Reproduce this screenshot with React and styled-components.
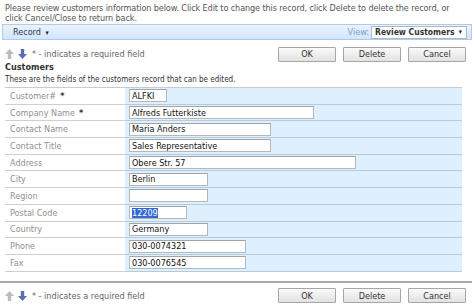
import React from 'react'
import styled, { createGlobalStyle } from 'styled-components'

const Global = createGlobalStyle`
  body {
    margin: 0;
    background: #fff;
    font-family: "DejaVu Sans Condensed", "DejaVu Sans", "Liberation Sans", sans-serif;
    font-size: 9px;
    color: #444;
  }
`

const fields = [
  { label: 'Customer#', req: true, value: 'ALFKI', w: 34 },
  { label: 'Company Name', req: true, value: 'Alfreds Futterkiste', w: 181 },
  { label: 'Contact Name', value: 'Maria Anders', w: 138 },
  { label: 'Contact Title', value: 'Sales Representative', w: 138 },
  { label: 'Address', value: 'Obere Str. 57', w: 223 },
  { label: 'City', value: 'Berlin', w: 75 },
  { label: 'Region', value: '', w: 75 },
  { label: 'Postal Code', value: '12209', w: 54, selected: true },
  { label: 'Country', value: 'Germany', w: 75 },
  { label: 'Phone', value: '030-0074321', w: 113 },
  { label: 'Fax', value: '030-0076545', w: 113 },
]

const App = () => {
  return (
    <Page>
      <Global />
      <Intro>
        Please review customers information below. Click Edit to change this record, click Delete to delete the record, or
        <br />
        click Cancel/Close to return back.
      </Intro>

      <Toolbar>
        <Menu>Record <Caret>▾</Caret></Menu>
        <ViewBox>
          <ViewLabel>View:</ViewLabel>
          <ViewSelect>
            <span>Review Customers</span>
            <Caret>▾</Caret>
          </ViewSelect>
        </ViewBox>
      </Toolbar>

      <ActionBar />

      <Title>Customers</Title>
      <Description>These are the fields of the customers record that can be edited.</Description>

      <Table>
        {fields.map((f) => (
          <Row key={f.label}>
            <Label>
              {f.label}
              {f.req && <Star>*</Star>}
            </Label>
            <Cell>
              <Input style={{ width: f.w }}>
                {f.selected ? <Selected>{f.value}</Selected> : f.value}
              </Input>
            </Cell>
          </Row>
        ))}
      </Table>

      <Rule />
      <ActionBar bottom />
    </Page>
  )
}

const ActionBar = ({ bottom }) => (
  <Actions $bottom={bottom}>
    <Hint>
      <svg width="9" height="10" viewBox="0 0 9 10">
        <path d="M4.5 0 L9 5 L6.2 5 L6.2 10 L2.8 10 L2.8 5 L0 5 Z" fill="#b9bcc2" />
      </svg>
      <svg width="9" height="10" viewBox="0 0 9 10" style={{ marginLeft: 2 }}>
        <path d="M4.5 10 L9 5 L6.2 5 L6.2 0 L2.8 0 L2.8 5 L0 5 Z" fill="#5b6fae" />
      </svg>
      <HintText>* - indicates a required field</HintText>
    </Hint>
    <Buttons>
      <Button>OK</Button>
      <Button>Delete</Button>
      <Button>Cancel</Button>
    </Buttons>
  </Actions>
)

export default App

const Page = styled.div`
  width: 474px;
  height: 305px;
  overflow: hidden;
`

const Intro = styled.div`
  padding: 3px 0 0 5px;
  line-height: 10px;
  color: #555;
  white-space: nowrap;
  letter-spacing: -0.1px;
`

const Toolbar = styled.div`
  margin: 1px 2px 0 2px;
  height: 14px;
  border: 1px solid #aecbef;
  background: linear-gradient(#eaf3fe, #d3e5fb);
  display: flex;
  align-items: center;
  justify-content: space-between;
  padding: 0 4px 0 10px;
`

const Menu = styled.div`
  color: #2a3b5a;
`

const Caret = styled.span`
  font-size: 7px;
  margin-left: 2px;
  color: #222;
`

const ViewBox = styled.div`
  display: flex;
  align-items: center;
  gap: 2px;
`

const ViewLabel = styled.span`
  color: #7b9cc8;
`

const ViewSelect = styled.div`
  width: 87px;
  height: 11px;
  background: #fff;
  border: 1px solid #aab8c8;
  display: flex;
  align-items: center;
  justify-content: space-between;
  padding: 0 4px 0 3px;
  font-weight: bold;
  font-size: 8.5px;
  color: #333;
  white-space: nowrap;
`

const Actions = styled.div`
  display: flex;
  align-items: center;
  justify-content: space-between;
  padding: 0 8px 0 5px;
  margin-top: ${(p) => (p.$bottom ? '5px' : '6px')};
  height: 16px;
`

const Hint = styled.div`
  display: flex;
  align-items: center;
  gap: 2px;
`

const HintText = styled.span`
  margin-left: 3px;
  color: #666;
`

const Buttons = styled.div`
  display: flex;
  gap: 7px;
`

const Button = styled.div`
  width: 56px;
  height: 13px;
  border: 1px solid #a6a6a6;
  border-radius: 1px;
  background: linear-gradient(#fafafa, #e2e2e2);
  display: flex;
  align-items: center;
  justify-content: center;
  color: #333;
`

const Title = styled.div`
  margin: 0 0 0 5px;
  font-weight: bold;
  color: #333;
  line-height: 10px;
`

const Description = styled.div`
  margin: 3px 0 0 5px;
  font-size: 8px;
  color: #333;
  line-height: 10px;
`

const Table = styled.div`
  margin: 2px 0 0 5px;
  width: 457px;
  border-top: 1px solid #c8ccd0;
`

const Row = styled.div`
  display: grid;
  grid-template-columns: 120px 1fr;
  height: 16.7px;
`

const Label = styled.div`
  display: flex;
  align-items: center;
  padding-left: 5px;
  color: #909090;
  border-bottom: 1px solid #cfcfcf;
`

const Star = styled.span`
  color: #333;
  font-weight: bold;
  margin-left: 4px;
`

const Cell = styled.div`
  display: flex;
  align-items: center;
  padding-left: 4px;
  background: #def0fd;
  border-bottom: 1px solid #b8c9d8;
`

const Input = styled.div`
  height: 11px;
  border: 1px solid #b4b8bd;
  border-top-color: #a0a4aa;
  background: #fff;
  padding-left: 2px;
  display: flex;
  align-items: center;
  color: #111;
  box-sizing: content-box;
`

const Selected = styled.span`
  background: #3168d5;
  color: #fff;
`

const Rule = styled.div`
  margin-top: 9px;
  height: 2px;
  width: 472px;
  background: #a8a8a8;
`
